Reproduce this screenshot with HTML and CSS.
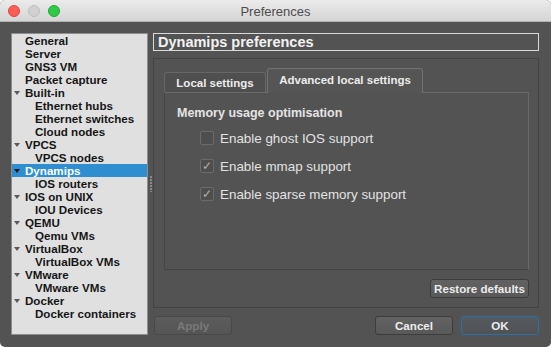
FILE: index.html
```html
<!DOCTYPE html>
<html>
<head>
    <title>Preferences</title>
    <link rel="stylesheet" href="styles.css">
</head>
<body>
    <div class="window">
        <div class="titlebar">
            <div class="lights">
                <span class="light close"></span>
                <span class="light minimize"></span>
                <span class="light zoom"></span>
            </div>
            <div class="title">Preferences</div>
        </div>

        <div class="main">
            <ul class="tree">
                <li class="item">General</li>
                <li class="item">Server</li>
                <li class="item">GNS3 VM</li>
                <li class="item">Packet capture</li>
                <li class="item parent"><span class="arrow"></span>Built-in</li>
                <li class="item child">Ethernet hubs</li>
                <li class="item child">Ethernet switches</li>
                <li class="item child">Cloud nodes</li>
                <li class="item parent"><span class="arrow"></span>VPCS</li>
                <li class="item child">VPCS nodes</li>
                <li class="item parent selected"><span class="arrow"></span>Dynamips</li>
                <li class="item child">IOS routers</li>
                <li class="item parent"><span class="arrow"></span>IOS on UNIX</li>
                <li class="item child">IOU Devices</li>
                <li class="item parent"><span class="arrow"></span>QEMU</li>
                <li class="item child">Qemu VMs</li>
                <li class="item parent"><span class="arrow"></span>VirtualBox</li>
                <li class="item child">VirtualBox VMs</li>
                <li class="item parent"><span class="arrow"></span>VMware</li>
                <li class="item child">VMware VMs</li>
                <li class="item parent"><span class="arrow"></span>Docker</li>
                <li class="item child">Docker containers</li>
            </ul>

            <div class="splitter"><span class="grip"></span></div>

            <div class="content">
                <div class="page-title">Dynamips preferences</div>

                <div class="frame">
                    <div class="tabs">
                        <div class="tab">Local settings</div>
                        <div class="tab active">Advanced local settings</div>
                    </div>
                    <div class="pane">
                        <div class="group-title">Memory usage optimisation</div>
                        <div class="check"><span class="box"></span>Enable ghost IOS support</div>
                        <div class="check"><span class="box checked">&#10003;</span>Enable mmap support</div>
                        <div class="check"><span class="box checked">&#10003;</span>Enable sparse memory support</div>
                    </div>
                    <div class="frame-actions">
                        <button class="btn restore">Restore defaults</button>
                    </div>
                </div>

                <div class="dialog-buttons">
                    <button class="btn apply" disabled>Apply</button>
                    <span class="spacer"></span>
                    <button class="btn">Cancel</button>
                    <button class="btn default">OK</button>
                </div>
            </div>
        </div>
    </div>
</body>
</html>
```

FILE: styles.css
```css
html, body {
    margin: 0;
    padding: 0;
    background-color: #ffffff;
}
body {
    font-family: "Liberation Sans", Arial, sans-serif;
}
.window {
    width: 551px;
    height: 347px;
    background-color: #535353;
    border-radius: 5px;
    overflow: hidden;
}
.titlebar {
    height: 22px;
    box-sizing: border-box;
    background: linear-gradient(#ebebeb, #d5d5d5);
    border-bottom: 1px solid #b4b4b4;
    display: flex;
    align-items: center;
}
.lights {
    display: flex;
    gap: 8px;
    padding-left: 8px;
    padding-top: 1px;
}
.light {
    width: 12px;
    height: 12px;
    border-radius: 50%;
    box-sizing: border-box;
}
.light.close {
    background-color: #fc5f57;
    border: 1px solid #e0443e;
}
.light.minimize {
    background-color: #d1d1d1;
    border: 1px solid #bdbdbd;
}
.light.zoom {
    background-color: #34c84a;
    border: 1px solid #1fa82f;
}
.title {
    flex: 1;
    text-align: center;
    font-size: 13px;
    color: #4d4d4d;
    margin-right: 60px;
    padding-top: 1px;
}
.main {
    display: flex;
    padding: 11px 12px 12px 11px;
    height: 325px;
    box-sizing: border-box;
}
.tree {
    list-style: none;
    margin: 0;
    padding: 0;
    width: 137px;
    box-sizing: border-box;
    background-color: #e0e0e0;
    border: 1px solid #8e8e8e;
}
.item {
    height: 13px;
    line-height: 13px;
    font-size: 11.6px;
    font-weight: bold;
    color: #161616;
    padding-left: 13px;
    white-space: nowrap;
}
.item.parent {
    padding-left: 2px;
}
.item.child {
    padding-left: 23px;
}
.item.selected {
    background-color: #2f8ed0;
    color: #ffffff;
}
.arrow {
    display: inline-block;
    width: 0;
    height: 0;
    border-left: 3px solid transparent;
    border-right: 3px solid transparent;
    border-top: 4px solid #5a5a5a;
    margin-right: 5px;
    vertical-align: 2px;
}
.item.selected .arrow {
    border-top-color: #1c1c1c;
}
.splitter {
    width: 5px;
    display: flex;
    align-items: center;
    justify-content: flex-end;
}
.grip {
    width: 2px;
    height: 16px;
    margin-right: 1px;
    background: repeating-linear-gradient(#8a8a8a 0 2px, transparent 2px 3px);
}
.content {
    flex: 1;
    display: flex;
    flex-direction: column;
}
.page-title {
    height: 18px;
    box-sizing: border-box;
    border: 1px solid #d9d9d9;
    color: #f2f2f2;
    font-size: 14.5px;
    font-weight: bold;
    line-height: 16px;
    padding-left: 4px;
}
.frame {
    margin-top: 7px;
    height: 250px;
    box-sizing: border-box;
    border: 1px solid #434343;
    padding: 9px 9px 9px 10px;
    display: flex;
    flex-direction: column;
}
.tabs {
    display: flex;
    align-items: flex-end;
    height: 24px;
    position: relative;
    z-index: 1;
}
.tab {
    height: 20px;
    box-sizing: border-box;
    padding: 0;
    width: 102px;
    text-align: center;
    font-size: 11.5px;
    font-weight: bold;
    color: #ececec;
    line-height: 20px;
    background-color: #4f4f4f;
    border: 1px solid #676767;
    border-bottom: none;
    border-radius: 3px 3px 0 0;
}
.tab.active {
    width: 156px;
    height: 25px;
    margin-bottom: -1px;
    margin-left: 1px;
    line-height: 22px;
    background-color: #555555;
    border-color: #727272;
}
.pane {
    height: 178px;
    box-sizing: border-box;
    border: 1px solid #6a6a6a;
    border-left-color: #444444;
    border-bottom-color: #444444;
    padding: 12px 12px 0 12px;
    color: #e4e4e4;
}
.group-title {
    font-size: 12.5px;
    font-weight: bold;
    line-height: 16px;
    margin-bottom: 3px;
}
.check {
    display: flex;
    align-items: center;
    height: 28px;
    padding-left: 23px;
    font-size: 13.4px;
    color: #e2e2e2;
}
.box {
    width: 14px;
    height: 14px;
    box-sizing: border-box;
    border: 1px solid #6b6b6b;
    border-radius: 2px;
    background-color: #4e4e4e;
    margin-right: 6px;
    font-size: 12px;
    line-height: 12px;
    text-align: center;
    color: #b0b0b0;
}
.frame-actions {
    display: flex;
    justify-content: flex-end;
    margin-top: 9px;
}
.btn {
    height: 19px;
    box-sizing: border-box;
    padding: 0;
    font-family: "Liberation Sans", Arial, sans-serif;
    font-size: 11.6px;
    font-weight: bold;
    color: #ececec;
    background: linear-gradient(#626262, #595959);
    border: 1px solid #3c3c3c;
    border-radius: 3px;
    width: 78px;
}
.btn.restore {
    width: 99px;
}
.btn.apply {
    color: #7a7a7a;
    background: linear-gradient(#5c5c5c, #555555);
    border-color: #484848;
    margin-left: 1px;
}
.btn.default {
    margin-left: 8px;
    background: linear-gradient(#555a5f, #4f5357);
    border-color: #2f6fa3;
}
.dialog-buttons {
    display: flex;
    margin-top: 8px;
}
.spacer {
    flex: 1;
}
```
